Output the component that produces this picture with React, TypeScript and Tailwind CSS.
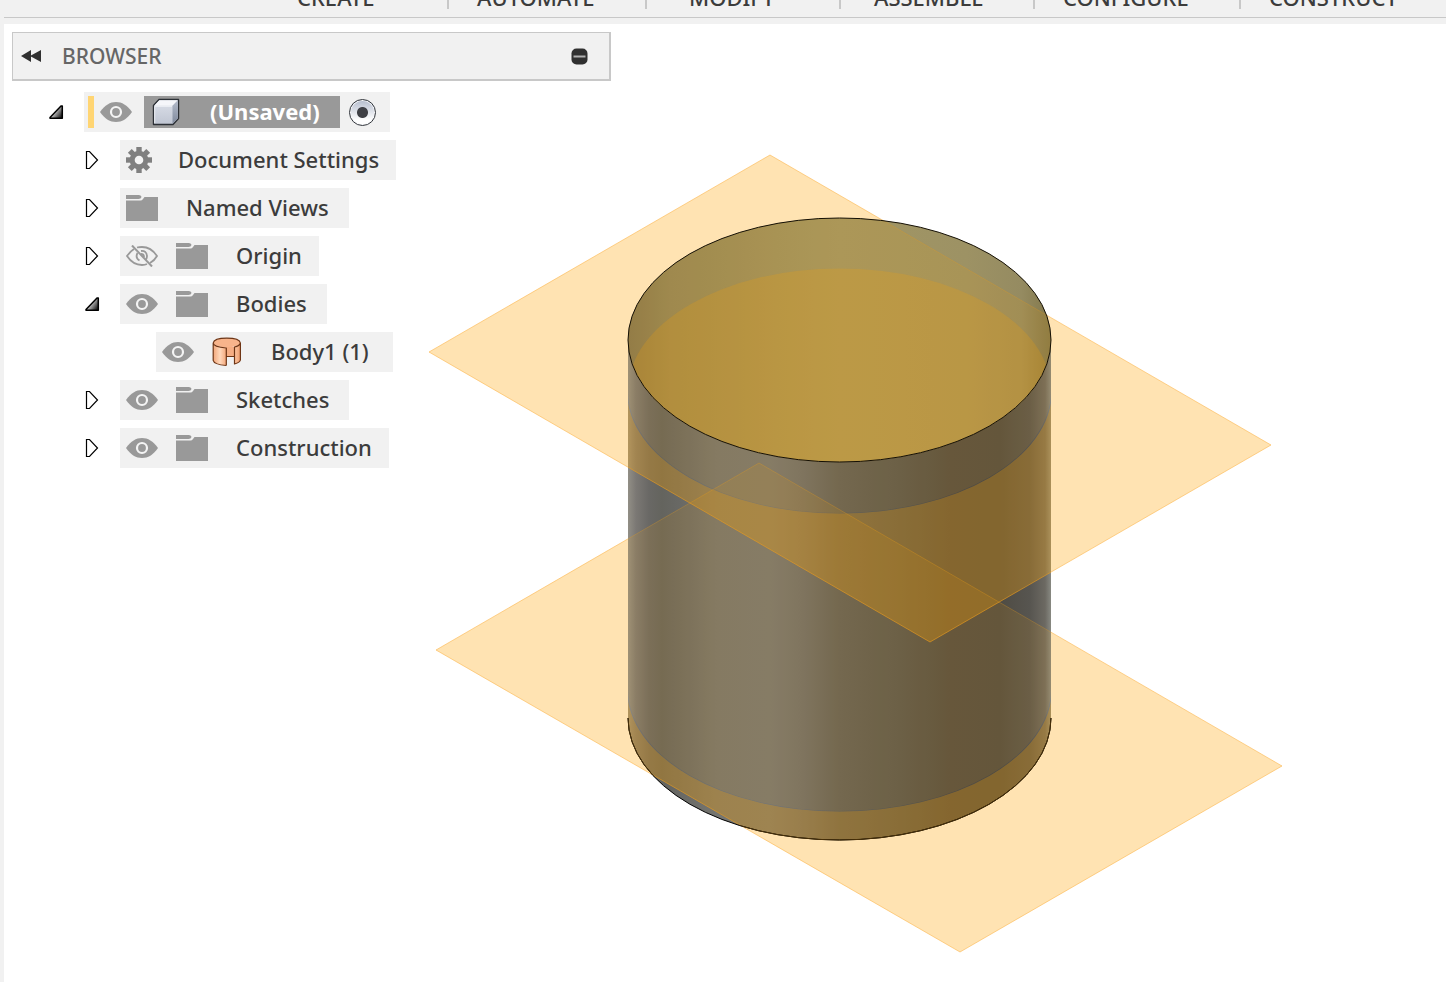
import React from "react";

const tools = [
  { label: "CREATE", cell: "w-[445px] pl-[293px]" },
  { label: "AUTOMATE", cell: "w-[198px] pl-[28px]" },
  { label: "MODIFY", cell: "w-[194px] pl-[42px]" },
  { label: "ASSEMBLE", cell: "w-[194px] pl-[33px]" },
  { label: "CONFIGURE", cell: "w-[206px] pl-[28px]" },
  { label: "CONSTRUCT", cell: "w-[200px] pl-[28px]" },
];

const UPPER = "770,155 1271,445 930,642 429,352";
const LOWER = "759,463 1282,766 960,952 436,650";
const WALL = "M628 340 A211.5 122 0 0 0 1051 340 V718 A211.5 122 0 0 1 628 718 Z";
const BASE_EDGE = "M628 718 A211.5 122 0 0 0 1051 718";

function Scene() {
  return (
    <svg className="absolute inset-0 h-full w-full" viewBox="4 24 1442 958" role="img" aria-label="Cylinder body with two construction planes">
      <defs>
        <linearGradient id="wall" gradientUnits="userSpaceOnUse" x1="628" y1="0" x2="1051" y2="0">
          <stop offset="0" stopColor="#928f86" />
          <stop offset=".019" stopColor="#7b7874" />
          <stop offset=".05" stopColor="#696865" />
          <stop offset=".08" stopColor="#64645e" />
          <stop offset=".111" stopColor="#676763" />
          <stop offset=".21" stopColor="#757570" />
          <stop offset=".336" stopColor="#767774" />
          <stop offset=".407" stopColor="#6f6f6d" />
          <stop offset=".5" stopColor="#61605a" />
          <stop offset=".643" stopColor="#585750" />
          <stop offset=".761" stopColor="#524d44" />
          <stop offset=".879" stopColor="#4f4c44" />
          <stop offset=".95" stopColor="#575550" />
          <stop offset=".986" stopColor="#6c6962" />
          <stop offset="1" stopColor="#888982" />
        </linearGradient>
        <linearGradient id="inside" gradientUnits="userSpaceOnUse" x1="628" y1="0" x2="1051" y2="0">
          <stop offset="0" stopColor="#857750" />
          <stop offset=".1" stopColor="#928659" />
          <stop offset=".35" stopColor="#9d9160" />
          <stop offset=".5" stopColor="#a19665" />
          <stop offset=".8" stopColor="#9d9264" />
          <stop offset=".93" stopColor="#958b61" />
          <stop offset="1" stopColor="#82774a" />
        </linearGradient>
        <clipPath id="wallClip"><path d={WALL} /></clipPath>
        <clipPath id="mouthClip"><ellipse cx="839.5" cy="340" rx="211.5" ry="122" /></clipPath>
        <clipPath id="upperClip"><polygon points={UPPER} /></clipPath>
        <clipPath id="lowerClip"><polygon points={LOWER} /></clipPath>
      </defs>
      <g fill="#ffa200" fillOpacity=".3" stroke="#fcb040" strokeOpacity=".55">
        <polygon points={UPPER} />
        <polygon points={LOWER} />
      </g>
      <path d={WALL} fill="url(#wall)" />
      <g clipPath="url(#wallClip)">
        <g clipPath="url(#lowerClip)">
          <path d="M628 300 H1051 V689 A211.5 122 0 0 1 628 689 Z" fill="#fca200" fillOpacity=".12" />
          <path d="M627 689 A211.5 122 0 0 0 1052 689 V860 H627 Z" fill="#fca200" fillOpacity=".3" />
        </g>
        <polyline points="436,650 759,463 1282,766" fill="none" stroke="#e59a20" strokeOpacity=".3" />
        <g clipPath="url(#upperClip)">
          <path d="M628 300 H1051 V391 A211.5 122 0 0 1 628 391 Z" fill="#fca200" fillOpacity=".12" />
          <path d="M627 391 A211.5 122 0 0 0 1052 391 V860 H627 Z" fill="#fca200" fillOpacity=".3" />
        </g>
        <polyline points="429,352 930,642 1271,445" fill="none" stroke="#e59a20" strokeOpacity=".65" />
        <path d="M436 650 L960 952" stroke="#e59a20" strokeOpacity=".65" />
      </g>
      <path d={BASE_EDGE} fill="none" stroke="#000" />
      <g clipPath="url(#lowerClip)">
        <path d={BASE_EDGE} fill="none" stroke="#4a3108" />
      </g>
      <ellipse cx="839.5" cy="340" rx="211.5" ry="122" fill="url(#inside)" />
      <g clipPath="url(#mouthClip)">
        <g clipPath="url(#upperClip)">
          <path d="M620 200 H1060 V391 H1051 A211.5 122.5 0 0 0 628 391 H620 Z" fill="#fca200" fillOpacity=".12" />
          <ellipse cx="839.5" cy="391" rx="211.5" ry="122.5" fill="#fca200" fillOpacity=".3" />
        </g>
        <path d="M770 155 L1271 445" stroke="#e59a20" strokeOpacity=".3" />
      </g>
      <ellipse cx="839.5" cy="340" rx="211.5" ry="122" fill="none" stroke="#140f04" />
    </svg>
  );
}

function Eye() {
  return (
    <svg width="32" height="20" viewBox="0 0 32 20" aria-hidden="true">
      <path d="M0 10 C5 3 10 0 16 0 S27 3 32 10 C27 17 22 20 16 20 S5 17 0 10Z" fill="#999" />
      <circle cx="16" cy="10" r="5" fill="#999" stroke="#f4f4f4" strokeWidth="2.2" />
    </svg>
  );
}

function EyeOff() {
  return (
    <svg width="32" height="22" viewBox="0 0 32 22" fill="none" stroke="#999" strokeWidth="1.8" aria-hidden="true">
      <path d="M8 4 Q4 6.500 1 11 Q7 20 16 20 Q19 20 21 19" />
      <path d="M11 2.500 Q13 2 16 2 Q25 2 31 11 Q28.500 15.500 24 18" />
      <path d="M11.500 8 Q9 13 13.500 15.500 M15 6 Q20.500 5.500 21 11 Q21 13 20 14.500" />
      <path d="M15 9 Q18 9 18 12" />
      <path d="M6 0.500 L26 21.500" strokeWidth="2" />
    </svg>
  );
}

function Folder() {
  return (
    <svg width="32" height="26" viewBox="0 1 32 26" fill="#999" aria-hidden="true">
      <path d="M0 1 H13 Q15.500 1.300 15.500 3 Q15 5 12.500 5 H0Z" />
      <path d="M0 6.500 H14.500 Q16 6.500 17 5 L18.500 3 H32 V27 H0Z" />
    </svg>
  );
}

function Gear() {
  return (
    <svg width="26" height="26" viewBox="0 0 26 26" aria-hidden="true">
      <g fill="#808080">
        {[0, 45, 90, 135].map((a) => (
          <rect key={a} x="10.300" y="0" width="5.400" height="26" transform={`rotate(${a} 13 13)`} />
        ))}
        <circle cx="13" cy="13" r="9.300" />
      </g>
      <circle cx="13" cy="13" r="4.300" fill="#f4f4f4" />
    </svg>
  );
}

function Cube() {
  return (
    <svg width="28" height="28" viewBox="0 0 28 28" aria-hidden="true">
      <defs>
        <linearGradient id="cubeFace" x1="0" y1="0" x2="0" y2="1">
          <stop offset="0" stopColor="#dde1ea" />
          <stop offset="1" stopColor="#bfc5d2" />
        </linearGradient>
        <linearGradient id="cubeSide" x1="0" y1="0" x2="0" y2="1">
          <stop offset="0" stopColor="#b4bccb" />
          <stop offset="1" stopColor="#7f899c" />
        </linearGradient>
      </defs>
      <path d="M1.500 7.500 L7 1.500 H26.500 V20.500 L21 26.500 H1.500Z" fill="url(#cubeFace)" stroke="#2c3036" strokeWidth="1.400" strokeLinejoin="round" />
      <path d="M2.200 7.800 L7.300 2.200 H25.800 L20.500 7.800Z" fill="#f5f6fa" />
      <path d="M20.500 7.800 L25.800 2.200 V20.200 L20.500 25.800Z" fill="url(#cubeSide)" />
      <path d="M2.700 25.300 V8.300 H20" fill="none" stroke="#eef0f5" />
    </svg>
  );
}

function Body() {
  return (
    <svg width="30" height="30" viewBox="0 0 30 30" aria-hidden="true">
      <defs>
        <linearGradient id="bodySide" gradientUnits="userSpaceOnUse" x1="1" y1="0" x2="29" y2="0">
          <stop offset="0" stopColor="#f2a578" />
          <stop offset=".25" stopColor="#ffd8bb" />
          <stop offset=".45" stopColor="#f5ad82" />
          <stop offset=".8" stopColor="#fbc09b" />
          <stop offset="1" stopColor="#ee9a69" />
        </linearGradient>
      </defs>
      <ellipse cx="14.800" cy="5.800" rx="13.500" ry="4.600" fill="#f8b48b" />
      <path d="M14 10 H24 V19.500 H14Z" fill="#f6ae84" />
      <path d="M1.200 6 Q1.500 10 14.300 11 V28.500 Q2 27.500 1.200 23.500Z" fill="url(#bodySide)" />
      <path d="M28.400 6 Q27.500 9 22.500 10 V27 Q28 25.500 28.400 23Z" fill="url(#bodySide)" />
      <path d="M14.300 28.500 Q2 27.500 1.200 23.500 V6 Q2 1.200 14.800 1.200 T28.400 6 V23 Q28 25.500 22.500 27 V10 Q27.500 9 28.400 6 M1.200 6 Q1.500 10 14.300 11 V28.500 M14.300 19.500 H22.500" fill="none" stroke="#6e3515" strokeWidth="1.200" strokeLinejoin="round" />
    </svg>
  );
}

function Arrow({ open }: { open?: boolean }) {
  return (
    <button type="button" aria-label={open ? "Collapse" : "Expand"} className="flex h-10 w-4 shrink-0 items-center justify-center">
      {open ? (
        <svg width="16" height="16" viewBox="0 0 16 16" aria-hidden="true">
          <defs>
            <linearGradient id="tri" x1="0" y1="0" x2="1" y2="0.700">
              <stop offset=".35" stopColor="#eee" />
              <stop offset="1" stopColor="#222" />
            </linearGradient>
          </defs>
          <path d="M2 14.300 V13.500 L13 2 H14.300 V14.300Z" fill="url(#tri)" stroke="#000" strokeWidth="1.500" strokeLinejoin="round" />
        </svg>
      ) : (
        <svg width="14" height="20" viewBox="0 0 14 20" aria-hidden="true">
          <path d="M1.500 1.500 H4.500 L12.500 10 L4.500 18.500 H1.500Z" fill="#fff" stroke="#000" strokeWidth="1.200" />
        </svg>
      )}
    </button>
  );
}

type Row = { label: string; box: string; indent: string; arrow?: "open" | "closed"; eye?: "on" | "off"; icon: React.ReactNode; gap: string };

const rows: Row[] = [
  { label: "Document Settings", indent: "pl-[72px]", box: "ml-5 pr-[17px]", arrow: "closed", icon: <Gear />, gap: "ml-[26px]" },
  { label: "Named Views", indent: "pl-[72px]", box: "ml-5 pr-5", arrow: "closed", icon: <Folder />, gap: "ml-[28px]" },
  { label: "Origin", indent: "pl-[72px]", box: "ml-5 pr-[17px]", arrow: "closed", eye: "off", icon: <Folder />, gap: "ml-[28px]" },
  { label: "Bodies", indent: "pl-[72px]", box: "ml-5 pr-5", arrow: "open", eye: "on", icon: <Folder />, gap: "ml-[28px]" },
  { label: "Body1 (1)", indent: "pl-[144px]", box: "pr-6", eye: "on", icon: <Body />, gap: "ml-[29px]" },
  { label: "Sketches", indent: "pl-[72px]", box: "ml-5 pr-5", arrow: "closed", eye: "on", icon: <Folder />, gap: "ml-[28px]" },
  { label: "Construction", indent: "pl-[72px]", box: "ml-5 pr-[17px]", arrow: "closed", eye: "on", icon: <Folder />, gap: "ml-[28px]" },
];

export default function App() {
  return (
    <div className="flex min-h-screen flex-col overflow-hidden bg-[#f1f1f1] pl-1 font-['Noto_Sans',sans-serif] text-[#3c3c3c]">
      <nav className="flex h-[18px] items-end overflow-hidden border-b border-[#c8c8c8]" aria-label="Tools">
        {tools.map((t) => (
          <div key={t.label} className={`relative flex h-[17px] shrink-0 items-end ${t.cell}`}>
            <button type="button" className="mb-2 shrink-0 text-[22px] leading-6 font-medium">{t.label}</button>
            {t.label !== "CONSTRUCT" && <span className="absolute top-0 right-0 h-[9px] w-[2px] bg-[#c8c8c8]" />}
          </div>
        ))}
      </nav>
      <main className="relative mt-[6px] flex-1 bg-white">
        <Scene />
        <aside className="relative w-[607px] pt-2 pl-2">
          <header className="flex h-[49px] items-center border border-r-2 border-b-2 border-[#c8c8c8] bg-[#f1f1f1] pr-[21px] pl-2">
            <button type="button" aria-label="Collapse panel" className="w-[41px]">
              <svg width="20" height="12" viewBox="0 0 20 12" fill="#303030" aria-hidden="true"><path d="M0 6 L10 0 V12Z M9 6 L20 0 V12Z" /></svg>
            </button>
            <h1 className="flex-1 text-[21px] leading-6 font-medium text-[#666]">BROWSER</h1>
            <button type="button" aria-label="Minimise">
              <svg width="17" height="17" viewBox="0 0 17 17" aria-hidden="true"><rect x=".5" y=".5" width="16" height="16" rx="5" fill="#303030" /><path d="M2.500 8.500 H14.500" stroke="#b0b0b0" strokeWidth="2" /></svg>
            </button>
          </header>
          <ul className="mt-[11px] flex flex-col gap-2 text-[22px] leading-[30px] font-medium">
            <li className="flex items-center pl-9">
              <Arrow open />
              <div className="ml-5 flex h-10 items-center bg-[#f1f1f1] pl-1">
                <span className="h-8 w-[6px] bg-[#ffd573]" />
                <button type="button" aria-label="Toggle visibility" className="ml-[6px]"><Eye /></button>
                <label htmlFor="active-doc" className="ml-3 flex h-8 items-center bg-[#999] pr-5 pl-2 font-bold text-white">
                  <Cube />
                  <span className="ml-[30px] pb-[2px]">(Unsaved)</span>
                </label>
                <input id="active-doc" type="radio" defaultChecked className="mr-[14px] ml-[9px] size-[27px] appearance-none rounded-full border border-[#33373d] bg-[radial-gradient(circle,#3f4046_0_5px,transparent_6px),linear-gradient(#b4bccd,#ffffff_80%)] shadow-[inset_0_0_0_1px_#f4f5f8]" />
              </div>
            </li>
            {rows.map((r) => (
              <li key={r.label} className={`flex items-center ${r.indent}`}>
                {r.arrow && <Arrow open={r.arrow === "open"} />}
                <div className={`flex h-10 items-center bg-[#f1f1f1] pl-[6px] ${r.box}`}>
                  {r.eye && (
                    <button type="button" aria-label="Toggle visibility" className="mr-[18px]">{r.eye === "on" ? <Eye /> : <EyeOff />}</button>
                  )}
                  {r.icon}
                  <span className={`pb-[2px] whitespace-nowrap ${r.gap}`}>{r.label}</span>
                </div>
              </li>
            ))}
          </ul>
        </aside>
      </main>
    </div>
  );
}
